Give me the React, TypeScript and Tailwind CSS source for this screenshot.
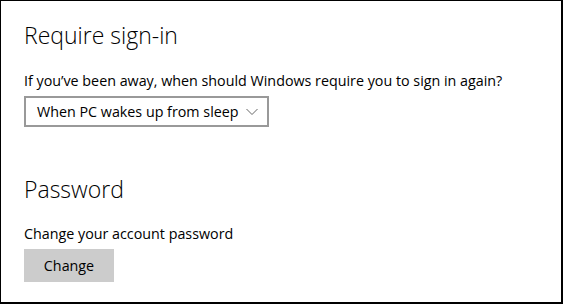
export default function App() {
  return (
    <div
      className="w-[563px] h-[304px] bg-white border-t border-l border-r-2 border-b-2 border-black text-black overflow-hidden"
      style={{ fontFamily: '"Segoe UI", "Open Sans", "Noto Sans", sans-serif' }}
    >
      <div className="pl-[23px] pt-[18px] flex flex-col items-start">
        <h1 className="text-[23px] font-light leading-[32px]">Require sign-in</h1>
        <p className="mt-[20px] text-[14.3px] leading-[20px]">
          If you’ve been away, when should Windows require you to sign in again?
        </p>
        <button className="mt-[5px] w-[245px] h-[31px] border-2 border-[#999999] flex items-center justify-between pl-[11px] pr-[9px] text-[14.3px]">
          <span>When PC wakes up from sleep</span>
          <svg width="12" height="8" viewBox="0 0 12 8" fill="none">
            <path d="M0.5 1 L6 6.5 L11.5 1" stroke="#666666" strokeWidth="1" />
          </svg>
        </button>
        <h2 className="mt-[46px] text-[23px] font-light leading-[32px]">Password</h2>
        <p className="mt-[19px] text-[14.3px] leading-[20px]">Change your account password</p>
        <button className="mt-[5px] w-[90px] h-[33px] bg-[#cccccc] text-[14.3px]">Change</button>
      </div>
    </div>
  );
}
